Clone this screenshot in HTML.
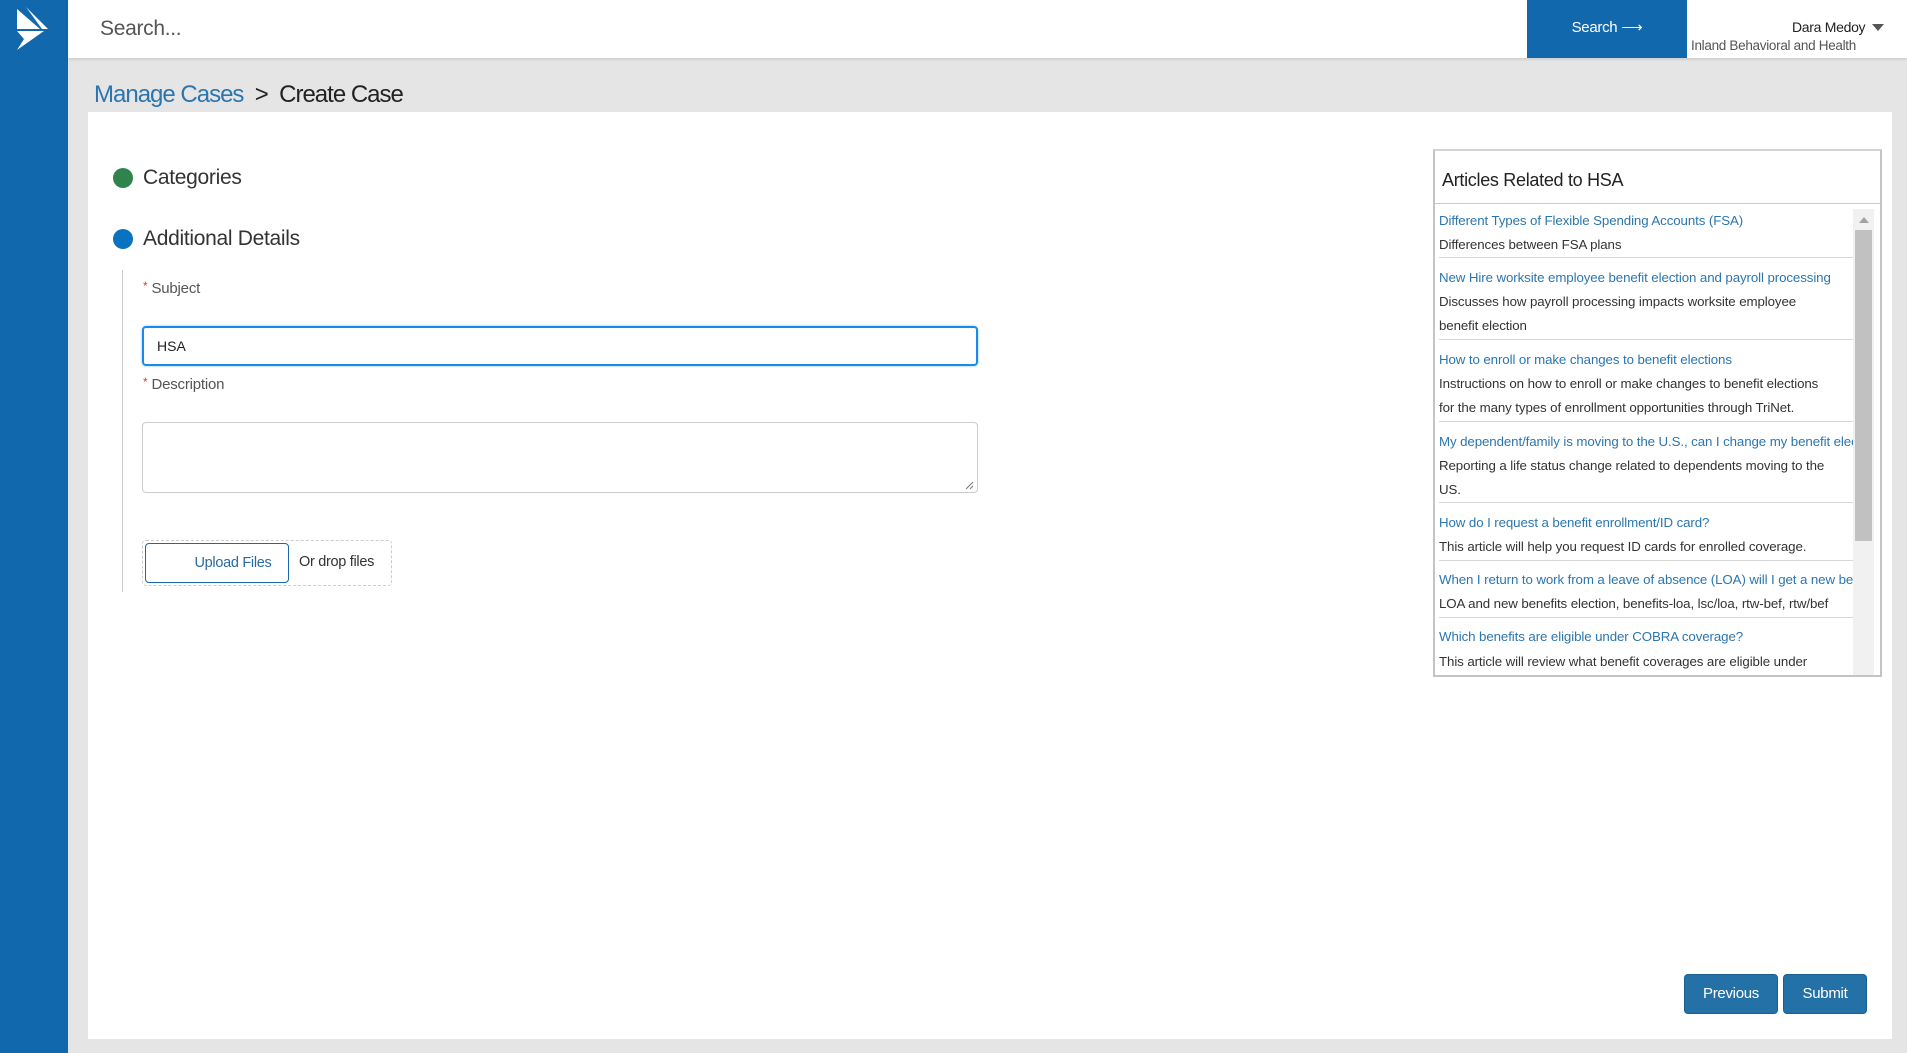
<!DOCTYPE html>
<html><head><meta charset="utf-8"><style>
*{box-sizing:border-box;margin:0;padding:0}
body{width:1907px;height:1053px;position:relative;overflow:hidden;background:#e5e5e5;font-family:"Liberation Sans",sans-serif;color:#333}
.a{position:absolute}
.side{left:0;top:0;width:68px;height:1053px;background:#1268ac}
.top{left:68px;top:0;width:1839px;height:58px;background:#fff;box-shadow:0 1px 3px rgba(0,0,0,.15)}
.card{left:88px;top:112px;width:1804px;height:927px;background:#fff}
.t{white-space:nowrap}
.link{color:#2b76ae}
.art{left:1439px;width:414px;font-size:13.3px;line-height:24px;letter-spacing:-0.1px}
.sep{left:1439px;width:414px;height:1px;background:#d8d8d8}
.btn{background:#2471a8;border:1px solid #1a5f92;border-radius:4px;color:#fff;font-size:15px;text-align:center;line-height:38px}
</style></head><body>
<div class="a side"></div>
<svg class="a" style="left:0;top:0" width="68" height="58"><path d="M17 9 L40 29 L17 29Z M26 7 L48 29 L42 29Z M17 31 L44 31 L17 50 L24 39Z" fill="#fff"/></svg>
<div class="a top"></div>
<div class="a t" style="left:100px;top:17px;font-size:21px;color:#555;letter-spacing:-0.3px">Search...</div>
<div class="a" style="left:1527px;top:0;width:160px;height:58px;background:#1268ac;color:#fff;font-size:15px;text-align:center;line-height:56px;letter-spacing:-0.3px">Search ⟶</div>
<div class="a t" style="left:1792px;top:19px;font-size:14px;color:#222;letter-spacing:-0.3px">Dara Medoy</div>
<svg class="a" style="left:1872px;top:24px" width="12" height="8"><path d="M0 0H12L6 7Z" fill="#555"/></svg>
<div class="a t" style="left:1691px;top:38px;font-size:13.5px;color:#555;letter-spacing:-0.3px">Inland Behavioral and Health</div>
<div class="a t" style="left:94px;top:81px;font-size:24px;letter-spacing:-1px"><span class="link">Manage Cases</span> <span style="color:#222">&nbsp;&gt;&nbsp; Create Case</span></div>
<div class="a card"></div>
<div class="a" style="left:113px;top:168px;width:20px;height:20px;border-radius:50%;background:#2e844c"></div>
<div class="a t" style="left:143px;top:166px;font-size:21px;color:#333;letter-spacing:-0.3px">Categories</div>
<div class="a" style="left:113px;top:229px;width:20px;height:20px;border-radius:50%;background:#0a72c0"></div>
<div class="a t" style="left:143px;top:227px;font-size:21px;color:#333;letter-spacing:-0.3px">Additional Details</div>
<div class="a" style="left:122px;top:270px;width:1px;height:322px;background:#ccc"></div>
<div class="a t" style="left:143px;top:279px;font-size:15px;color:#555;letter-spacing:-0.2px"><span style="color:#e33;font-size:12px;vertical-align:3px">*</span> Subject</div>
<div class="a" style="left:142px;top:326px;width:836px;height:40px;border:2px solid #1b8af0;border-radius:4px;box-shadow:0 0 2px #7bbcf5"></div>
<div class="a t" style="left:157px;top:338px;font-size:14px;color:#222">HSA</div>
<div class="a t" style="left:143px;top:375px;font-size:15px;color:#555;letter-spacing:-0.2px"><span style="color:#e33;font-size:12px;vertical-align:3px">*</span> Description</div>
<div class="a" style="left:142px;top:422px;width:836px;height:71px;border:1px solid #ccc;border-radius:4px"></div>
<svg class="a" style="left:964px;top:480px" width="10" height="10"><path d="M9 2L2 9M9 6L6 9" stroke="#777"/></svg>
<div class="a" style="left:142px;top:540px;width:250px;height:46px;border:1px dashed #ccc;border-radius:4px"></div>
<div class="a" style="left:145px;top:543px;width:144px;height:40px;border:1.5px solid #1a6aa8;border-radius:4px;color:#2b6aa0;font-size:14.5px;line-height:38px;text-align:center;padding-left:32px;letter-spacing:-0.3px">Upload Files</div>
<div class="a t" style="left:299px;top:554px;font-size:14.5px;color:#333;letter-spacing:-0.3px">Or drop files</div>
<div class="a" style="left:1433px;top:149px;width:449px;height:528px;border:2px solid #c4c4c4;border-top-color:#d4d4d4"></div>
<div class="a" style="left:1435px;top:151px;width:445px;height:53px;border-bottom:1px solid #ccc"></div>
<div class="a t" style="left:1442px;top:170px;font-size:18px;color:#222;letter-spacing:-0.3px">Articles Related to HSA</div>
<div class="a" style="left:1853px;top:209px;width:21px;height:466px;background:#f1f1f1"></div>
<div class="a" style="left:1855px;top:230px;width:17px;height:311px;background:#c1c1c1"></div>
<svg class="a" style="left:1859px;top:217px" width="10" height="6"><path d="M0 6L5 0L10 6Z" fill="#a3a3a3"/></svg>
<div class="a" style="left:1439px;top:209px;width:414px;height:466px;overflow:hidden">
<div style="position:relative;left:-1439px;top:-209px">
<div class="a art t link" style="top:209px">Different Types of Flexible Spending Accounts (FSA)</div>
<div class="a art t" style="top:233px">Differences between FSA plans</div>
<div class="a sep" style="top:257px"></div>
<div class="a art t link" style="top:266px">New Hire worksite employee benefit election and payroll processing</div>
<div class="a art" style="top:290px">Discusses how payroll processing impacts worksite employee<br>benefit election</div>
<div class="a sep" style="top:339px"></div>
<div class="a art t link" style="top:348px">How to enroll or make changes to benefit elections</div>
<div class="a art t" style="top:372px">Instructions on how to enroll or make changes to benefit elections<br>for the many types of enrollment opportunities through TriNet.</div>
<div class="a sep" style="top:421px"></div>
<div class="a art t link" style="top:430px">My dependent/family is moving to the U.S., can I change my benefit elections?</div>
<div class="a art" style="top:454px">Reporting a life status change related to dependents moving to the<br>US.</div>
<div class="a sep" style="top:502px"></div>
<div class="a art t link" style="top:511px">How do I request a benefit enrollment/ID card?</div>
<div class="a art t" style="top:535px">This article will help you request ID cards for enrolled coverage.</div>
<div class="a sep" style="top:560px"></div>
<div class="a art t link" style="top:568px">When I return to work from a leave of absence (LOA) will I get a new benefits election?</div>
<div class="a art t" style="top:592px">LOA and new benefits election, benefits-loa, lsc/loa, rtw-bef, rtw/bef</div>
<div class="a sep" style="top:617px"></div>
<div class="a art t link" style="top:625px">Which benefits are eligible under COBRA coverage?</div>
<div class="a art t" style="top:650px">This article will review what benefit coverages are eligible under</div>
</div></div>
<div class="a btn" style="left:1684px;top:974px;width:94px;height:40px;letter-spacing:-0.3px">Previous</div>
<div class="a btn" style="left:1783px;top:974px;width:84px;height:40px;letter-spacing:-0.3px">Submit</div>
</body></html>
